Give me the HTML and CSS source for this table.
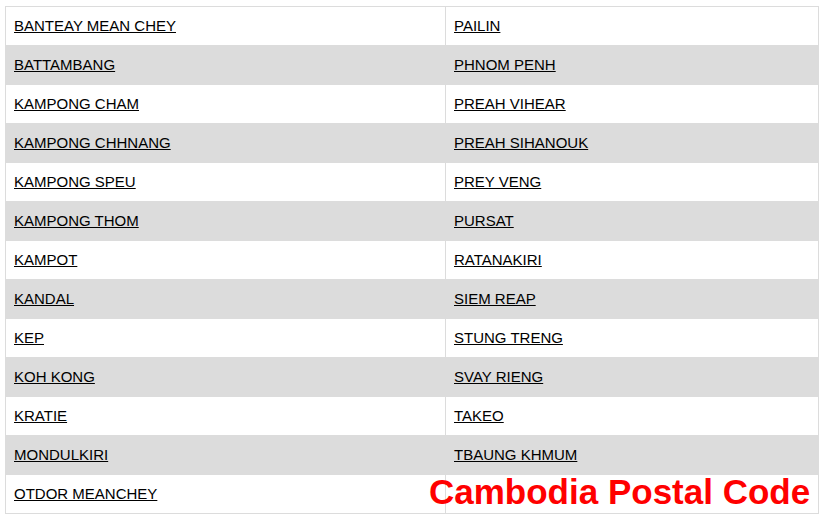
FILE: index.html
```html
<!DOCTYPE html>
<html>
<head>
<meta charset="utf-8">
<link rel="stylesheet" href="styles.css">
</head>
<body>
<div class="wrap">
<table class="codes">
<tr><td><a href="#">BANTEAY MEAN CHEY</a></td><td><a href="#">PAILIN</a></td></tr>
<tr><td><a href="#">BATTAMBANG</a></td><td><a href="#">PHNOM PENH</a></td></tr>
<tr><td><a href="#">KAMPONG CHAM</a></td><td><a href="#">PREAH VIHEAR</a></td></tr>
<tr><td><a href="#">KAMPONG CHHNANG</a></td><td><a href="#">PREAH SIHANOUK</a></td></tr>
<tr><td><a href="#">KAMPONG SPEU</a></td><td><a href="#">PREY VENG</a></td></tr>
<tr><td><a href="#">KAMPONG THOM</a></td><td><a href="#">PURSAT</a></td></tr>
<tr><td><a href="#">KAMPOT</a></td><td><a href="#">RATANAKIRI</a></td></tr>
<tr><td><a href="#">KANDAL</a></td><td><a href="#">SIEM REAP</a></td></tr>
<tr><td><a href="#">KEP</a></td><td><a href="#">STUNG TRENG</a></td></tr>
<tr><td><a href="#">KOH KONG</a></td><td><a href="#">SVAY RIENG</a></td></tr>
<tr><td><a href="#">KRATIE</a></td><td><a href="#">TAKEO</a></td></tr>
<tr><td><a href="#">MONDULKIRI</a></td><td><a href="#">TBAUNG KHMUM</a></td></tr>
<tr><td><a href="#">OTDOR MEANCHEY</a></td><td></td></tr>
</table>
<div class="mark">Cambodia Postal Code</div>
</div>
</body>
</html>
```
FILE: styles.css
```css
html, body {
  margin: 0;
  padding: 0;
  background: #fff;
}
body {
  font-family: "Liberation Sans", Arial, sans-serif;
}
.wrap {
  position: relative;
  margin: 6px 0 0 5px;
  width: 814px;
}
.codes {
  border-collapse: collapse;
  width: 814px;
  table-layout: fixed;
}
.codes td {
  border: 1px solid #dcdcdc;
  height: 39px;
  padding: 0 8px 1px;
  box-sizing: border-box;
  font-size: 15px;
  vertical-align: middle;
}
.codes td:first-child {
  width: 440px;
}
.codes tr:nth-child(even) td {
  background: #dcdcdc;
}
.codes a {
  color: #000;
  text-decoration: underline;
}
.mark {
  position: absolute;
  left: 424px;
  top: 464px;
  color: #ff0000;
  font-weight: bold;
  font-size: 35px;
  line-height: 44px;
  white-space: nowrap;
}
```
